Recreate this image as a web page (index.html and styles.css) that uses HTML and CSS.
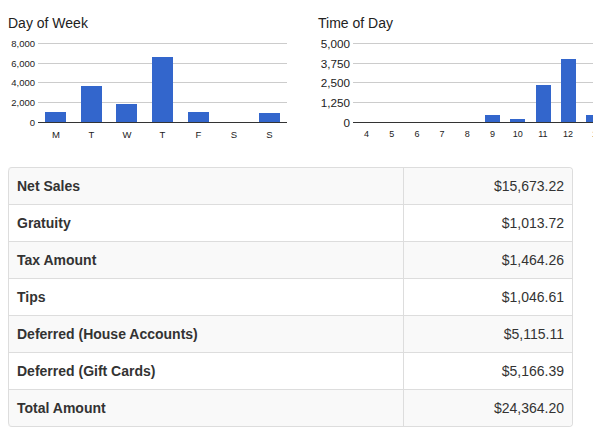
FILE: index.html
```html
<!DOCTYPE html>
<html>
<head>
<meta charset="utf-8">
<link rel="stylesheet" href="styles.css">
</head>
<body>
<div class="charts">
  <svg class="chart chart-left" width="292" height="159" viewBox="8 8 292 159">
    <text class="title" x="8" y="28">Day of Week</text>
    <g class="grid">
      <line x1="38" x2="287" y1="43.5" y2="43.5"/>
      <line x1="38" x2="287" y1="63.5" y2="63.5"/>
      <line x1="38" x2="287" y1="82.5" y2="82.5"/>
      <line x1="38" x2="287" y1="102.5" y2="102.5"/>
    </g>
    <g class="ylab small">
      <text x="35" y="47">8,000</text>
      <text x="35" y="67">6,000</text>
      <text x="35" y="86">4,000</text>
      <text x="35" y="106">2,000</text>
      <text x="35" y="126">0</text>
    </g>
    <g class="bars">
      <rect x="45" y="112" width="21" height="10"/>
      <rect x="81" y="86" width="21" height="36"/>
      <rect x="116" y="104" width="21" height="18"/>
      <rect x="152" y="57" width="21" height="65"/>
      <rect x="188" y="112" width="21" height="10"/>
      <rect x="259" y="113" width="21" height="9"/>
    </g>
    <line class="base" x1="38" x2="287" y1="122.5" y2="122.5"/>
    <g class="xlab small">
      <text x="56" y="138">M</text>
      <text x="91.5" y="138">T</text>
      <text x="127" y="138">W</text>
      <text x="162.5" y="138">T</text>
      <text x="198.5" y="138">F</text>
      <text x="234" y="138">S</text>
      <text x="269.5" y="138">S</text>
    </g>
  </svg>
  <svg class="chart chart-right" width="293" height="159" viewBox="300 8 293 159">
    <text class="title" x="318" y="28">Time of Day</text>
    <g class="grid">
      <line x1="353" x2="593" y1="43.5" y2="43.5"/>
      <line x1="353" x2="593" y1="63.5" y2="63.5"/>
      <line x1="353" x2="593" y1="82.5" y2="82.5"/>
      <line x1="353" x2="593" y1="102.5" y2="102.5"/>
    </g>
    <g class="ylab big">
      <text x="350" y="47.5">5,000</text>
      <text x="350" y="67.5">3,750</text>
      <text x="350" y="86.5">2,500</text>
      <text x="350" y="106.5">1,250</text>
      <text x="350" y="126.5">0</text>
    </g>
    <g class="bars">
      <rect x="485" y="115" width="15" height="7"/>
      <rect x="510" y="119" width="15" height="3"/>
      <rect x="536" y="85" width="15" height="37"/>
      <rect x="561" y="59" width="15" height="63"/>
      <rect x="586" y="115" width="15" height="7"/>
    </g>
    <line class="base" x1="353" x2="593" y1="122.5" y2="122.5"/>
    <g class="xlab tiny">
      <text x="366.5" y="137">4</text>
      <text x="391.7" y="137">5</text>
      <text x="416.9" y="137">6</text>
      <text x="442.1" y="137">7</text>
      <text x="467.3" y="137">8</text>
      <text x="492.5" y="137">9</text>
      <text x="517.7" y="137">10</text>
      <text x="542.9" y="137">11</text>
      <text x="568.1" y="137">12</text>
      <text x="597" y="137">13</text>
    </g>
  </svg>
</div>
<table class="totals">
  <tbody>
    <tr><th>Net Sales</th><td>$15,673.22</td></tr>
    <tr><th>Gratuity</th><td>$1,013.72</td></tr>
    <tr><th>Tax Amount</th><td>$1,464.26</td></tr>
    <tr><th>Tips</th><td>$1,046.61</td></tr>
    <tr><th>Deferred (House Accounts)</th><td>$5,115.11</td></tr>
    <tr><th>Deferred (Gift Cards)</th><td>$5,166.39</td></tr>
    <tr><th>Total Amount</th><td>$24,364.20</td></tr>
  </tbody>
</table>
</body>
</html>
```
FILE: styles.css
```css
html {
  background: #fff;
}
body {
  margin: 8px 0 8px 8px;
  background: #fff;
  font-family: "Liberation Sans", Arial, Helvetica, sans-serif;
  font-size: 14px;
  line-height: 20px;
  color: #333;
}
.charts {
  display: flex;
  height: 159px;
  overflow: hidden;
}
.chart {
  flex: none;
  display: block;
  font-family: "Liberation Sans", Arial, sans-serif;
}
.title {
  font-size: 14px;
  fill: #222;
}
.grid line {
  stroke: #cccccc;
  stroke-width: 1;
}
.base {
  stroke: #333;
  stroke-width: 1;
}
.bars rect {
  fill: #3366cc;
}
.ylab text {
  text-anchor: end;
  fill: #222;
}
.xlab text {
  text-anchor: middle;
  fill: #222;
}
.small {
  font-size: 9.5px;
}
.big {
  font-size: 11.7px;
}
.tiny {
  font-size: 9px;
}
.totals {
  width: 565px;
  border-collapse: separate;
  border-spacing: 0;
  border: 1px solid #ddd;
  border-left: 0;
  border-radius: 4px;
}
.totals th,
.totals td {
  padding: 8px;
  line-height: 20px;
  border-left: 1px solid #ddd;
  border-top: 1px solid #ddd;
  vertical-align: top;
}
.totals tr:first-child th,
.totals tr:first-child td {
  border-top: 0;
}
.totals th {
  text-align: left;
  font-weight: bold;
  width: 378px;
}
.totals td {
  text-align: right;
}
.totals tr:nth-child(odd) th,
.totals tr:nth-child(odd) td {
  background: #f9f9f9;
}
.totals tr:first-child th {
  border-top-left-radius: 4px;
}
.totals tr:first-child td {
  border-top-right-radius: 4px;
}
.totals tr:last-child th {
  border-bottom-left-radius: 4px;
}
.totals tr:last-child td {
  border-bottom-right-radius: 4px;
}
```
